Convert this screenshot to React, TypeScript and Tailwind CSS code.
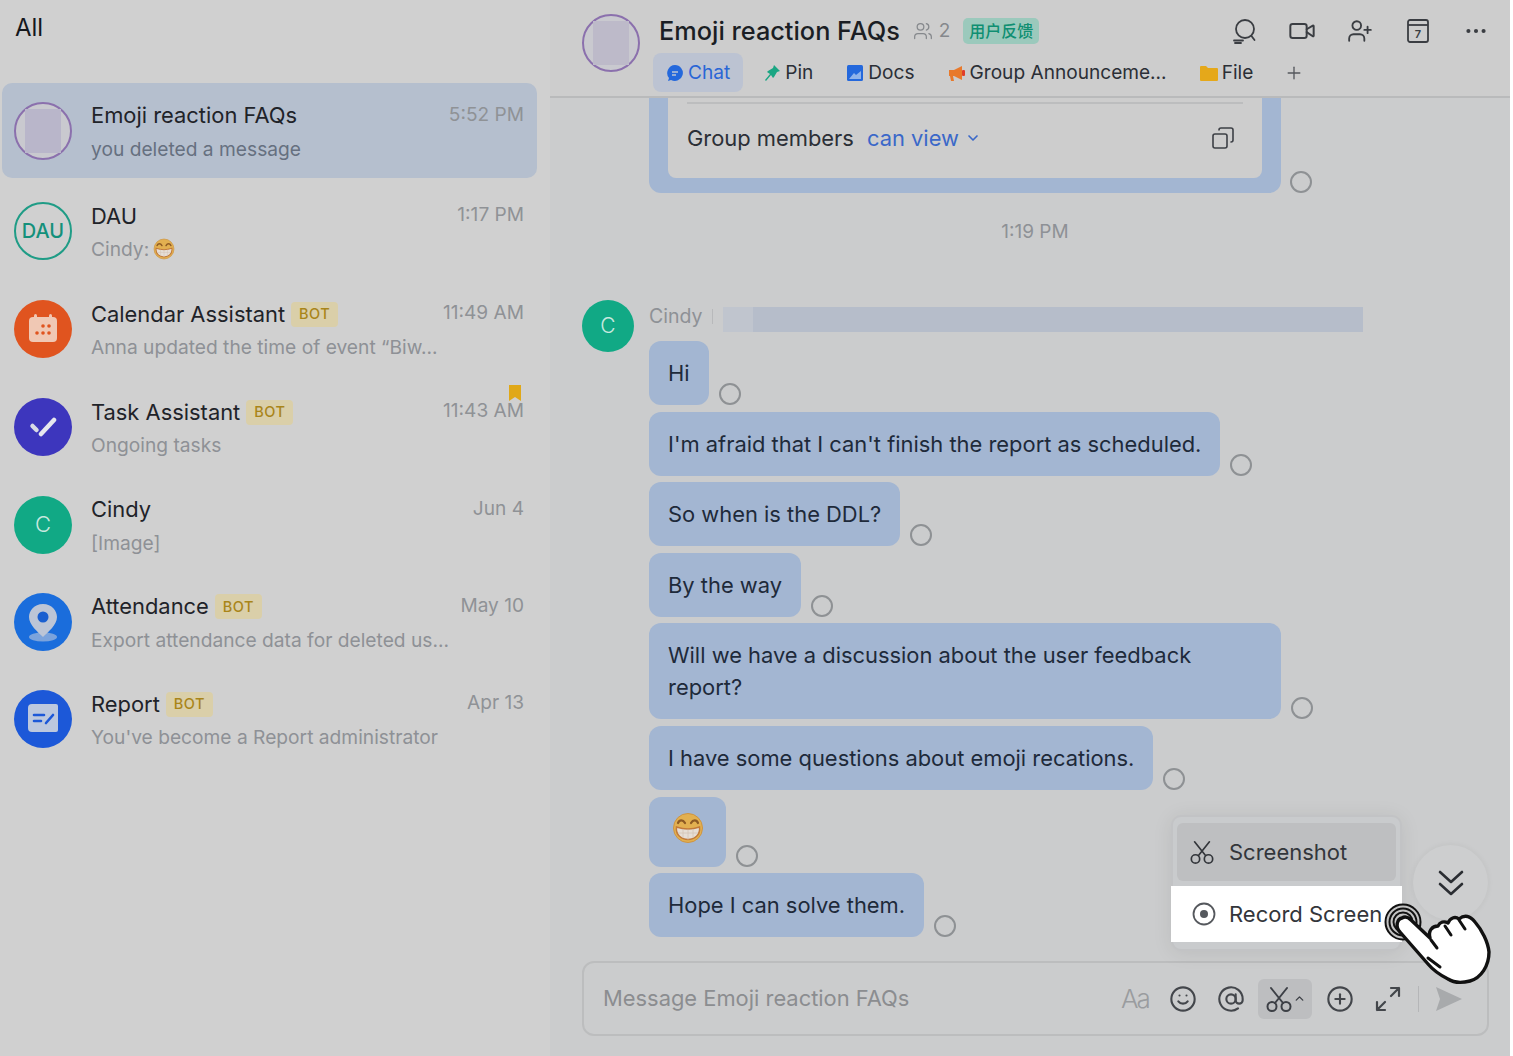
import React from "react";
import { Video, UserPlus, MoreHorizontal, Copy, ChevronDown, Plus, Smile, AtSign, CirclePlus, Users, ChevronUp } from "lucide-react";

const Laugh = ({ s = 22 }: { s?: number }) => (
  <svg width={s} height={s} viewBox="0 0 32 32">
    <circle cx="16" cy="16" r="14.5" fill="#e2b050" stroke="#cf9440" strokeWidth="1" />
    <path d="M6 11c1.500-3.500 5-3.500 7 0M19 11c2-3.500 5.500-3.500 7 0" fill="none" stroke="#8d5a24" strokeWidth="2.200" strokeLinecap="round" />
    <path d="M4.500 15c7 2.500 16 2.500 23 0 1 8-5 12.500-11.500 12.500S3.500 23 4.500 15z" fill="#e6ded6" stroke="#c27a3a" strokeWidth="1.500" />
    <path d="M11 17v9M16 17.500v10M21 17v9M6 21h20" stroke="#d3c4b6" strokeWidth="0.800" />
  </svg>
);

const ScissorsIcon = ({ s = 28, sw = 2 }: { s?: number; sw?: number }) => (
  <svg width={s} height={s} viewBox="0 0 28 28" fill="none" stroke="currentColor" strokeWidth={sw} strokeLinecap="round">
    <circle cx="7" cy="21.500" r="4.500" />
    <circle cx="21" cy="21.500" r="4.500" />
    <path d="M10 18L22 3M18 18L6 3" />
  </svg>
);

const Bot = () => (
  <span className="ml-[6px] flex h-[25px] w-[47px] items-center justify-center rounded-[4px] bg-[#dacfa9] text-[14.5px] font-medium tracking-[0.5px] text-[#a98519]">BOT</span>
);

const Round = ({ c, children }: { c: string; children?: React.ReactNode }) => (
  <div className={`flex h-[58px] w-[58px] shrink-0 items-center justify-center rounded-full ${c}`}>{children}</div>
);

const GroupAvatar = () => (
  <div className="flex h-[58px] w-[58px] shrink-0 items-center justify-center rounded-full border-2 border-[#8b70ad] bg-[#c9c9cf]">
    <div className="h-[44px] w-[36px] bg-[#b9b6ca]" />
  </div>
);

const rows = [
  { name: "DAU", time: "1:17 PM", preview: <span className="flex items-center gap-[4px]">Cindy: <Laugh /></span>, h: "h-[98px]",
    av: <Round c="border-2 border-[#1f9c86] text-[20px] font-medium text-[#14907b]">DAU</Round> },
  { name: "Calendar Assistant", bot: true, time: "11:49 AM", preview: "Anna updated the time of event “Biw...", h: "h-[98px]",
    av: <Round c="bg-[#e0541f]"><svg width="32" height="32" viewBox="0 0 32 32"><rect x="2" y="4" width="28" height="25" rx="4" fill="#f0c8b4" /><rect x="7" y="1" width="3" height="6" rx="1.5" fill="#f0c8b4" /><rect x="22" y="1" width="3" height="6" rx="1.5" fill="#f0c8b4" /><g fill="#e0541f"><circle cx="16" cy="13" r="1.8" /><circle cx="22" cy="13" r="1.8" /><circle cx="10" cy="20" r="1.8" /><circle cx="16" cy="20" r="1.8" /><circle cx="22" cy="20" r="1.8" /></g></svg></Round> },
  { name: "Task Assistant", bot: true, time: "11:43 AM", preview: "Ongoing tasks", h: "h-[98px]", mark: true,
    av: <Round c="bg-[#3d36bd]"><svg width="28" height="22" viewBox="0 0 28 22"><path d="M3.500 10l4 4" stroke="#d9dbe6" strokeWidth="4.500" strokeLinecap="round" /><path d="M12 18L25 4" stroke="#e6e7ee" strokeWidth="4.500" strokeLinecap="round" /></svg></Round> },
  { name: "Cindy", time: "Jun 4", preview: "[Image]", h: "h-[97px]",
    av: <Round c="bg-[#11a985] text-[22px] font-light text-[#c8e8df]">C</Round> },
  { name: "Attendance", bot: true, time: "May 10", preview: "Export attendance data for deleted us...", h: "h-[97px]",
    av: <Round c="bg-[#1a6ddc]"><svg width="36" height="42" viewBox="0 0 36 42"><ellipse cx="18" cy="36" rx="14" ry="4.5" fill="#7ba3dc" /><path d="M18 3C9 3 4 10 4 16c0 8 9 15 14 20 5-5 14-12 14-20C32 10 27 3 18 3z" fill="#bcc5d6" /><circle cx="18" cy="16" r="5.5" fill="#1a5fd0" /></svg></Round> },
  { name: "Report", bot: true, time: "Apr 13", preview: "You've become a Report administrator", h: "h-[98px]",
    av: <Round c="bg-[#1c58d8]"><svg width="34" height="34" viewBox="0 0 34 34"><path d="M6 2h24a2 2 0 012 2v24a2 2 0 01-2 2H6a4 4 0 01-4-4V6a4 4 0 014-4z" fill="#bcc8de" /><path d="M8 13h10M8 19h7M20 21l7-8" stroke="#1c58d8" strokeWidth="2.6" strokeLinecap="round" /></svg></Round> },
];

const RowText = ({ name, bot, time, preview, dark }: any) => (
  <div className="ml-[19px] flex min-w-0 flex-1 flex-col pt-[2px]">
    <div className="flex items-start justify-between">
      <div className="flex h-[32px] items-center">
        <span className="text-[21.9px] text-[#1f2329]">{name}</span>
        {bot && <Bot />}
      </div>
      <span className="text-[19.1px] leading-[28px] text-[#8f9296]">{time}</span>
    </div>
    <div className={`mt-[2px] h-[30px] text-[19.2px] leading-[30px] ${dark ? "text-[#667080]" : "text-[#8e9196]"}`}>{preview}</div>
  </div>
);

const Tab = ({ icon, label, active }: { icon: React.ReactNode; label: string; active?: boolean }) => (
  <div className={`flex h-[39px] items-center gap-[4px] rounded-[8px] px-[13px] text-[19.1px] ${active ? "bg-[#bcc3d2] text-[#2a66d6]" : "text-[#2b2f36]"}`}>
    {icon}
    <span>{label}</span>
  </div>
);

const Circle = () => <span className="h-[22px] w-[22px] shrink-0 rounded-full border-2 border-[#8e9194]" />;

const Msg = ({ children, w, h = "h-[64px]" }: { children: React.ReactNode; w?: string; h?: string }) => (
  <div className="flex items-end gap-[10px]">
    <div className={`flex items-center rounded-[12px] bg-[#a3b6d2] px-[19px] text-[21.9px] leading-[32px] text-[#1e2a3a] ${h} ${w ?? ""}`}>{children}</div>
    <Circle />
  </div>
);

export default function App() {
  return (
    <div className="relative flex h-[1056px] w-[1513px] overflow-hidden bg-white font-['Inter','Liberation_Sans','Noto_Sans_CJK_SC',sans-serif]">
      {/* Sidebar */}
      <aside className="flex w-[550px] shrink-0 flex-col bg-[#d0d0d0]">
        <div className="flex h-[83px] items-start pl-[15px] pt-[12px] text-[24px] leading-[32px] text-[#15181d]">All</div>
        <div className="ml-[2px] flex h-[95px] w-[535px] items-center rounded-[10px] bg-[#b5bfce] pl-[12px] pr-[13px]">
          <GroupAvatar />
          <RowText name="Emoji reaction FAQs" time="5:52 PM" preview="you deleted a message" dark />
        </div>
        <div className="mt-[4px] flex flex-col">
          {rows.map((r) => (
            <div key={r.name} className={`relative ml-[2px] flex w-[535px] items-center pl-[12px] pr-[13px] ${r.h}`}>
              {r.av}
              <RowText name={r.name} bot={r.bot} time={r.time} preview={r.preview} />
              {r.mark && (
                <svg className="absolute right-[15px] top-[7px]" width="14" height="16" viewBox="0 0 14 16"><path d="M1 0h12v16l-6-4-6 4z" fill="#e0a818" /></svg>
              )}
            </div>
          ))}
        </div>
      </aside>

      {/* Chat */}
      <main className="relative flex w-[960px] shrink-0 flex-col bg-[#cbcccd]">
        <header className="flex h-[98px] shrink-0 items-start border-b-2 border-[#b9babb] bg-[#cdcdcd] pl-[32px]">
          <div className="mt-[14px] flex h-[58px] w-[58px] shrink-0 items-center justify-center rounded-full border-2 border-[#8b70ad] bg-[#c9c9cf]">
            <div className="h-[44px] w-[36px] bg-[#bdbac9]" />
          </div>
          <div className="ml-[13px] flex flex-1 flex-col">
            <div className="flex h-[53px] items-start pt-[15px]">
              <div className="flex h-[32px] flex-1 items-center pl-[6px]">
                <span className="text-[25.3px] font-medium text-[#1b1e24]">Emoji reaction FAQs</span>
                <Users size={20} strokeWidth={1.5} className="ml-[13px] text-[#85888c]" />
                <span className="ml-[6px] text-[19px] text-[#85888c]">2</span>
                <span className="ml-[13px] flex h-[26px] w-[76px] items-center justify-center rounded-[5px] bg-[#9bc9bc] text-[16px] font-medium text-[#0f8f72]">用户反馈</span>
              </div>
              <div className="flex h-[32px] items-center pr-[5px] text-[#3a3d42]">
                <span className="flex w-[58px] justify-center">
                  <svg width="28" height="28" viewBox="0 0 28 28" fill="none" stroke="currentColor" strokeWidth="1.8" strokeLinecap="round"><circle cx="15" cy="12" r="9" /><path d="M21.5 19l3 4M4 23.5h9M5 26h6" /></svg>
                </span>
                <span className="flex w-[58px] justify-center"><Video size={28} strokeWidth={1.7} /></span>
                <span className="flex w-[58px] justify-center"><UserPlus size={26} strokeWidth={1.7} /></span>
                <span className="flex w-[58px] justify-center">
                  <svg width="26" height="28" viewBox="0 0 26 28" fill="none" stroke="currentColor" strokeWidth="1.8"><rect x="3" y="3" width="20" height="22" rx="2" /><path d="M3 8h20" /><text x="13" y="21" fontSize="11" textAnchor="middle" fill="currentColor" stroke="none" fontWeight="600">7</text></svg>
                </span>
                <span className="flex w-[58px] justify-center"><MoreHorizontal size={26} strokeWidth={1.8} /></span>
              </div>
            </div>
            <div className="flex items-center gap-[7px]">
              <Tab active label="Chat" icon={<svg width="18" height="18" viewBox="0 0 18 18"><path d="M9 1a8 8 0 11-4 15l-3 1 1-3A8 8 0 019 1z" fill="#2468dc" /><path d="M6 8h6M6 11h4" stroke="#bcc3d2" strokeWidth="1.4" /></svg>} />
              <Tab label="Pin" icon={<svg width="18" height="18" viewBox="0 0 18 18"><path d="M11 1l6 6-3 1-3 5-1 1-2-3-5 6-1-1 5-6-3-2 1-1 5-3z" fill="#1aa683" /></svg>} />
              <Tab label="Docs" icon={<svg width="18" height="18" viewBox="0 0 18 18"><rect x="1" y="1" width="16" height="16" rx="1.5" fill="#2468dc" /><path d="M3 15l5-6 2 2 5-4v8H3z" fill="#8fb2ea" /></svg>} />
              <Tab label="Group Announceme..." icon={<svg width="18" height="18" viewBox="0 0 18 18"><path d="M1 6h5l8-4v14L6 12H5l1 5H3l-1-5H1z" fill="#e8792b" /><rect x="14" y="6" width="3" height="6" rx="1" fill="#e03e2a" /></svg>} />
              <Tab label="File" icon={<svg width="18" height="16" viewBox="0 0 18 16"><path d="M0 2a1 1 0 011-1h5l2 2h9a1 1 0 011 1v11a1 1 0 01-1 1H1a1 1 0 01-1-1z" fill="#e5a81a" /></svg>} />
              <Plus size={20} strokeWidth={1.6} className="ml-[11px] text-[#55585d]" />
            </div>
          </div>
        </header>

        <div className="ml-[99px] flex h-[95px] w-[663px] shrink-0 items-end gap-[9px]">
          <div className="h-[95px] w-[632px] rounded-b-[12px] bg-[#a3b6d2] px-[19px]">
            <div className="flex h-[80px] flex-col rounded-b-[8px] bg-[#cdcdcd] px-[19px] text-[21.9px] text-[#2b2f36]">
              <div className="mt-[4px] h-[2px] shrink-0 bg-[#bcbdbe]" />
              <div className="flex flex-1 items-center justify-between pb-[6px] pr-[8px]">
                <span className="flex items-center">
                  Group members
                  <span className="ml-[13px] text-[#3a68c9]">can view</span>
                  <ChevronDown size={16} strokeWidth={2.5} className="ml-[6px] text-[#3a68c9]" />
                </span>
                <Copy size={24} strokeWidth={1.6} className="-scale-x-100 text-[#3d4046]" />
              </div>
            </div>
          </div>
          <Circle />
        </div>

        <div className="flex h-[107px] shrink-0 items-start justify-center pl-[10px] pt-[26px] text-[19px] leading-[26px] text-[#8e9196]">1:19 PM</div>

        <div className="flex shrink-0 pl-[32px]">
          <div className="flex h-[52px] w-[52px] shrink-0 items-center justify-center rounded-full bg-[#11a985] text-[21px] font-light text-[#c8e8df]">C</div>
          <div className="ml-[15px] flex flex-col">
            <div className="flex h-[41px] items-start gap-[10px] pt-[3px]">
              <span className="text-[19.5px] leading-[26px] text-[#8e9196]">Cindy</span>
              <span className="mt-[6px] h-[15px] w-px bg-[#b8b9bb]" />
              <div className="mt-[4px] flex h-[25px] w-[640px] items-center bg-[#c0c5ce] pl-[30px]">
                <div className="h-full w-full bg-[#b6bdca]" />
              </div>
            </div>
            <div className="flex flex-col items-start gap-[6.6px]">
              <Msg>Hi</Msg>
              <Msg>I'm afraid that I can't finish the report as scheduled.</Msg>
              <Msg>So when is the DDL?</Msg>
              <Msg>By the way</Msg>
              <Msg w="w-[632px]" h="h-[96px]">Will we have a discussion about the user feedback report?</Msg>
              <Msg>I have some questions about emoji recations.</Msg>
              <Msg h="h-[70px] w-[77px] justify-center pb-[8px] !px-0"><Laugh s={32} /></Msg>
              <Msg>Hope I can solve them.</Msg>
            </div>
          </div>
        </div>

        {/* Composer */}
        <div className="ml-[32px] mt-[24px] flex h-[75px] w-[907px] shrink-0 items-center rounded-[12px] border-2 border-[#bcbdbe] pl-[19px] pr-[14px]">
          <span className="flex-1 text-[21.9px] text-[#8b8d90]">Message Emoji reaction FAQs</span>
          <span className="flex w-[48px] justify-center text-[26px] font-light tracking-[-2px] text-[#9a9c9f]">Aa</span>
          <span className="flex w-[48px] justify-center text-[#43464b]"><Smile size={28} strokeWidth={1.8} /></span>
          <span className="flex w-[48px] justify-center text-[#43464b]"><AtSign size={28} strokeWidth={1.8} /></span>
          <span className="ml-[3px] mr-[4px] flex h-[40px] w-[54px] items-center justify-center rounded-[6px] bg-[#bdbec0] text-[#3d4046]">
            <ScissorsIcon s={28} sw={2} />
            <ChevronUp size={13} strokeWidth={2.5} />
          </span>
          <span className="flex w-[48px] justify-center text-[#43464b]"><CirclePlus size={28} strokeWidth={1.8} /></span>
          <span className="flex w-[48px] justify-center text-[#43464b]">
            <svg width="28" height="28" viewBox="0 0 28 28" fill="none" stroke="currentColor" strokeWidth="2.2" strokeLinecap="round" strokeLinejoin="round"><path d="M3 25l8-8M3 17v8h8M25 3l-8 8M17 3h8v8" /></svg>
          </span>
          <span className="mx-[6px] h-[26px] w-px bg-[#b5b6b8]" />
          <span className="flex w-[48px] justify-center">
            <svg width="28" height="26" viewBox="0 0 28 26"><path d="M1 1l26 12L1 25l4-12z" fill="#a8aaac" /></svg>
          </span>
        </div>

        {/* Popup menu */}
        <div className="absolute left-[621px] top-[815px] h-[136px] w-[231px] rounded-[10px] border-2 border-[#c2c3c5] bg-[#c9cbcd] shadow-[0_2px_20px_rgba(0,0,0,0.08)]">
          <div className="ml-[4px] mt-[6px] flex h-[58px] w-[219px] items-center gap-[14px] rounded-[6px] bg-[#bebfc1] pl-[12px] text-[22px] text-[#33363b]">
            <ScissorsIcon s={26} sw={1.8} />
            Screenshot
          </div>
        </div>
        <div className="absolute left-[621px] top-[886px] flex h-[56px] w-[231px] items-center gap-[13px] bg-white pl-[21px] text-[22px] text-[#33363b]">
          <svg width="24" height="24" viewBox="0 0 24 24"><circle cx="12" cy="12" r="10.5" fill="none" stroke="#55585d" strokeWidth="1.8" /><circle cx="12" cy="12" r="4" fill="#55585d" /></svg>
          Record Screen
        </div>

        {/* Scroll to bottom */}
        <div className="absolute left-[863px] top-[845px] flex h-[75px] w-[75px] items-center justify-center rounded-full bg-[#cdcecf] shadow-[0_0_6px_rgba(0,0,0,0.06)]">
          <svg width="26" height="28" viewBox="0 0 26 28" fill="none" stroke="#2a2d32" strokeWidth="2.6" strokeLinecap="round" strokeLinejoin="round"><path d="M2 3l11 10L24 3M2 15l11 10 11-10" /></svg>
        </div>

        {/* Hand cursor */}
        <svg className="absolute left-[830px] top-[900px]" width="115" height="88" viewBox="0 0 115 88">
          <g fill="none" stroke="#111" strokeWidth="2">
            <circle cx="23" cy="22" r="17.5" fill="#c4c4c4" />
            <circle cx="23" cy="22" r="13.5" />
            <circle cx="23" cy="22" r="9.5" />
          </g>
          <path d="M20 32C15 27 17 19 22 18C25 16 28 17 31 20L50 38C48 31 52 26 58 26C60 22 64 21 68 23C70 18 75 16 79 19C85 14 90 16 95 22C102 30 108 42 109 52C109 66 101 78 90 81C82 83 74 83 68 79C60 75 53 70 48 64Z" fill="#fff" stroke="#111" strokeWidth="3.4" strokeLinejoin="round" />
          <path d="M51 40l6 8M65 26l6 9M79 20l6 9M48 58l12 9" fill="none" stroke="#111" strokeWidth="3" strokeLinecap="round" />
        </svg>
      </main>

      <div className="flex-1 bg-white" />
    </div>
  );
}
